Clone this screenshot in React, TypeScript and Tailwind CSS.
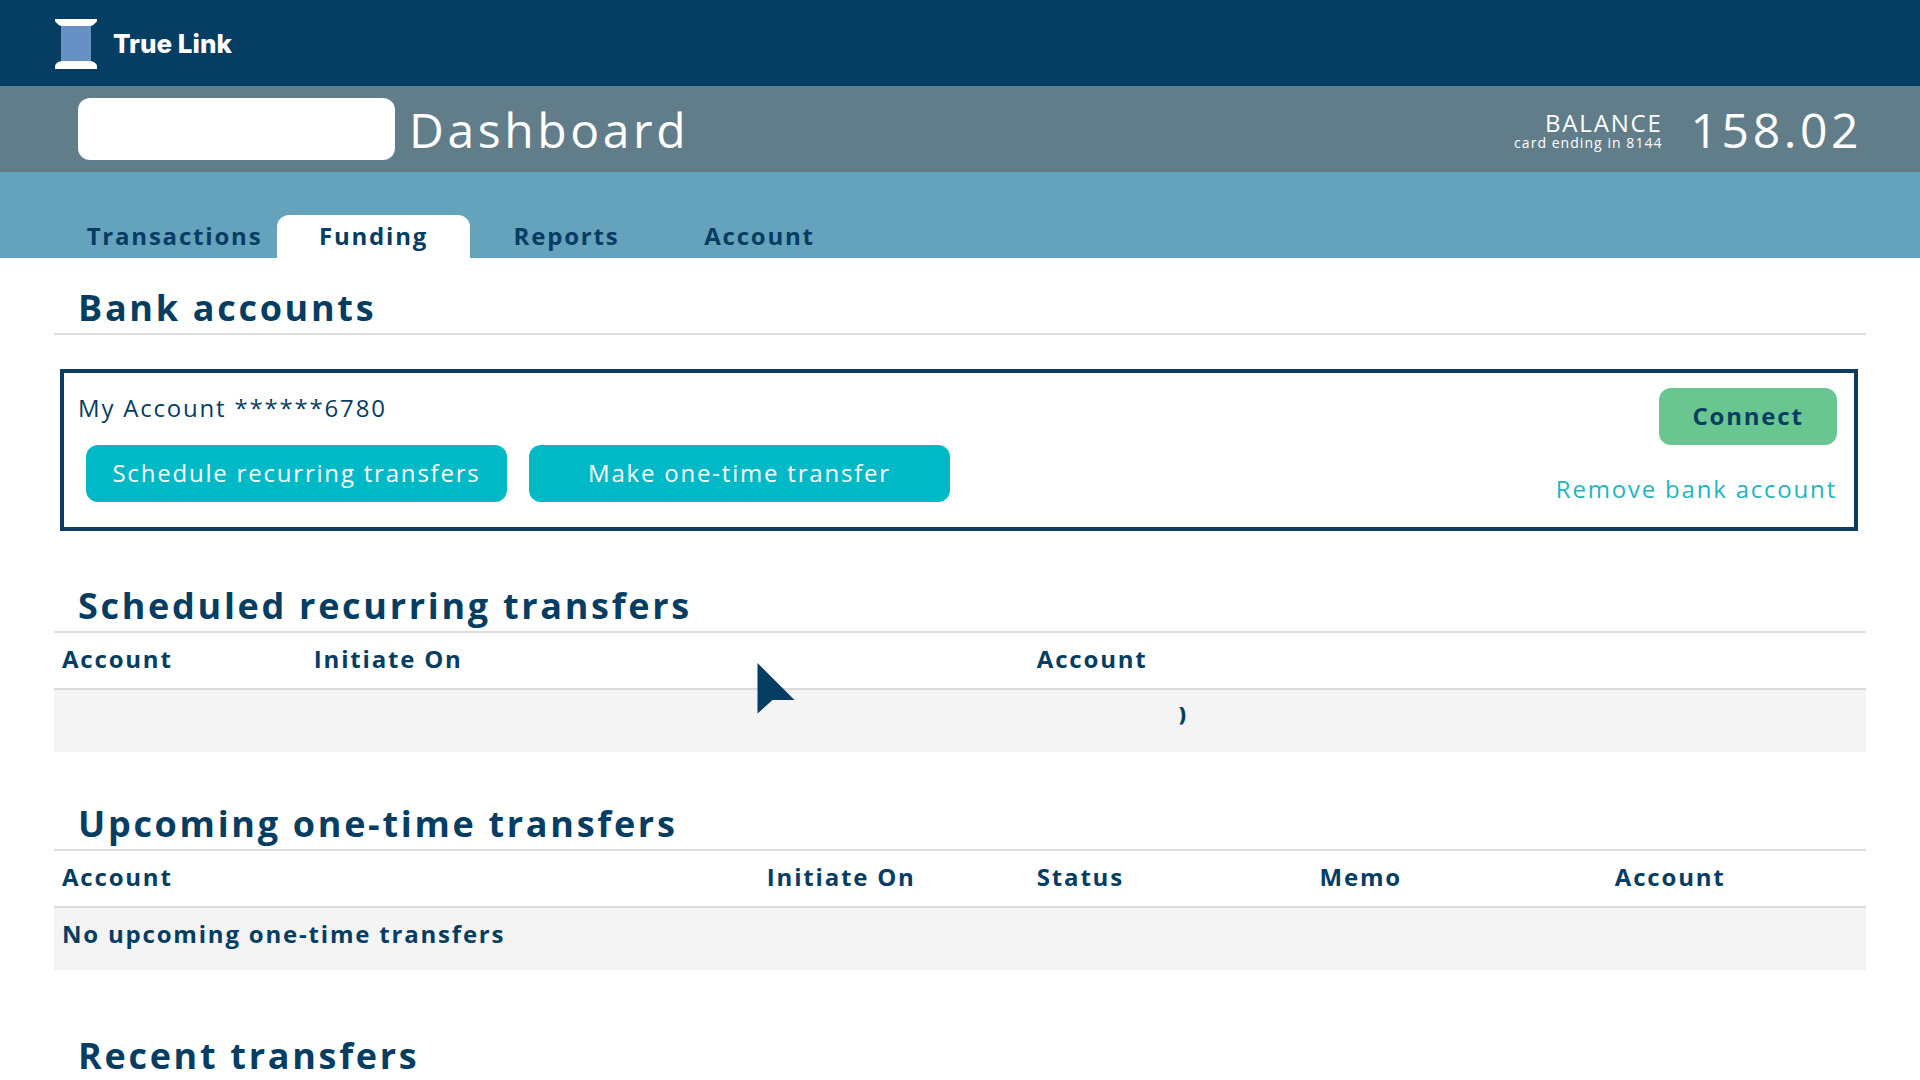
import type { ReactNode } from "react";

const tabs = ["Transactions", "Funding", "Reports", "Account"];

function Logo() {
  return (
    <svg width="42" height="50" viewBox="0 0 42 50" aria-hidden="true">
      <rect x="6" y="5" width="30" height="40" fill="#6790c4" />
      <path d="M0 0H42V2.5C40 4 38.5 7 35 7H7C3.5 7 2 4 0 2.5Z" fill="#fff" />
      <path d="M0 50H42V46.5C41 44 38 42 34 42H8C4 42 1 44 0 46.5Z" fill="#fff" />
    </svg>
  );
}

function Pointer() {
  return (
    <svg
      className="pointer-events-none absolute top-[663px] left-[757px]"
      width="38"
      height="51"
      viewBox="0 0 38 51"
      aria-hidden="true"
    >
      <path d="M0.5 0L37.5 37H15.5L0.5 50.5Z" fill="#063d63" />
    </svg>
  );
}

function SectionTitle({ children }: { children: ReactNode }) {
  return (
    <h2 className="border-b-2 border-[#dcdcdc] pb-[7px] pl-6 text-4xl leading-9 font-bold tracking-[0.075em]">
      {children}
    </h2>
  );
}

function Th({ children }: { children: ReactNode }) {
  return (
    <th scope="col" className="h-[57px] border-b-2 border-[#dcdcdc] px-2 pt-2 text-left align-top leading-9">
      {children}
    </th>
  );
}

export default function App() {
  return (
    <div className="relative h-screen overflow-hidden bg-white font-['Open_Sans','Noto_Sans',sans-serif] text-2xl tracking-[0.075em] text-[#063d63]">
      <header className="flex h-[86px] items-center gap-4 bg-[#063d63] px-[55px] pt-0.5">
        <Logo />
        <span className="font-['Inter',sans-serif] text-[26px] font-extrabold tracking-normal text-white">
          True Link
        </span>
      </header>

      <div className="flex h-[86px] items-center justify-between bg-[#627d8a] pr-[58px] pl-[78px] text-white">
        <div className="flex items-center gap-3.5">
          <input
            type="text"
            aria-label="Account holder"
            className="h-[62px] w-[317px] rounded-xl bg-white px-4 text-[#063d63] outline-none"
          />
          <h1 className="pt-0.5 text-5xl leading-[62px] tracking-[0.075em]">Dashboard</h1>
        </div>
        <div className="flex items-center gap-7 pt-0.5">
          <div className="pt-0.5 text-right">
            <div className="leading-6">BALANCE</div>
            <div className="text-sm leading-4 tracking-[0.075em]">card ending in 8144</div>
          </div>
          <div className="text-5xl leading-[62px] tracking-[0.075em]">158.02</div>
        </div>
      </div>

      <nav className="flex h-[86px] items-end bg-[#65a2bc] pl-[78px]">
        {tabs.map((tab) => (
          <a
            key={tab}
            href="#"
            aria-current={tab === "Funding" ? "page" : undefined}
            className="flex h-[43px] w-[193px] items-center justify-center rounded-t-xl pb-0.5 font-bold first:mr-1.5 aria-[current=page]:bg-white"
          >
            {tab}
          </a>
        ))}
      </nav>

      <main className="px-[54px] pt-8">
        <section>
          <SectionTitle>Bank accounts</SectionTitle>
          <div className="mt-[34px] mr-2 ml-1.5 flex h-[162px] justify-between border-4 border-[#0d3c5f] pr-[17px] pl-3.5">
            <div>
              <p className="mt-[17px] leading-9">My Account ******6780</p>
              <div className="mt-[19px] ml-2 flex gap-[22px]">
                <button className="h-[57px] w-[421px] rounded-xl bg-[#00b9c6] pb-0.5 text-white">
                  Schedule recurring transfers
                </button>
                <button className="h-[57px] w-[421px] rounded-xl bg-[#00b9c6] pb-0.5 text-white">
                  Make one-time transfer
                </button>
              </div>
            </div>
            <div className="flex flex-col items-end">
              <button className="mt-[15px] h-[57px] w-[178px] rounded-xl bg-[#6ac690] pb-0.5 font-bold">
                Connect
              </button>
              <a href="#" className="mt-[26px] leading-9 text-[#1fb5bf]">
                Remove bank account
              </a>
            </div>
          </div>
        </section>

        <section className="mt-[57px]">
          <SectionTitle>Scheduled recurring transfers</SectionTitle>
          <table className="w-full table-fixed border-separate border-spacing-0">
            <colgroup>
              <col className="w-[13.9%]" />
              <col className="w-[39.9%]" />
              <col />
            </colgroup>
            <thead>
              <tr>
                <Th>Account</Th>
                <Th>Initiate On</Th>
                <Th>Account</Th>
              </tr>
            </thead>
            <tbody>
              <tr className="bg-[#f4f4f4]">
                <td className="h-[62px]" />
                <td />
                <td className="pt-2 pl-[150px] align-top text-xl leading-8 font-extrabold">{")"}</td>
              </tr>
            </tbody>
          </table>
        </section>

        <section className="mt-[54px]">
          <SectionTitle>Upcoming one-time transfers</SectionTitle>
          <table className="w-full table-fixed border-separate border-spacing-0">
            <colgroup>
              <col className="w-[38.9%]" />
              <col className="w-[14.9%]" />
              <col className="w-[15.6%]" />
              <col className="w-[16.3%]" />
              <col />
            </colgroup>
            <thead>
              <tr>
                <Th>Account</Th>
                <Th>Initiate On</Th>
                <Th>Status</Th>
                <Th>Memo</Th>
                <Th>Account</Th>
              </tr>
            </thead>
            <tbody>
              <tr className="bg-[#f4f4f4]">
                <td colSpan={5} className="h-[62px] px-2 pt-2 align-top leading-9 font-bold">
                  No upcoming one-time transfers
                </td>
              </tr>
            </tbody>
          </table>
        </section>

        <section className="mt-[68px]">
          <SectionTitle>Recent transfers</SectionTitle>
        </section>
      </main>
      <Pointer />
    </div>
  );
}
